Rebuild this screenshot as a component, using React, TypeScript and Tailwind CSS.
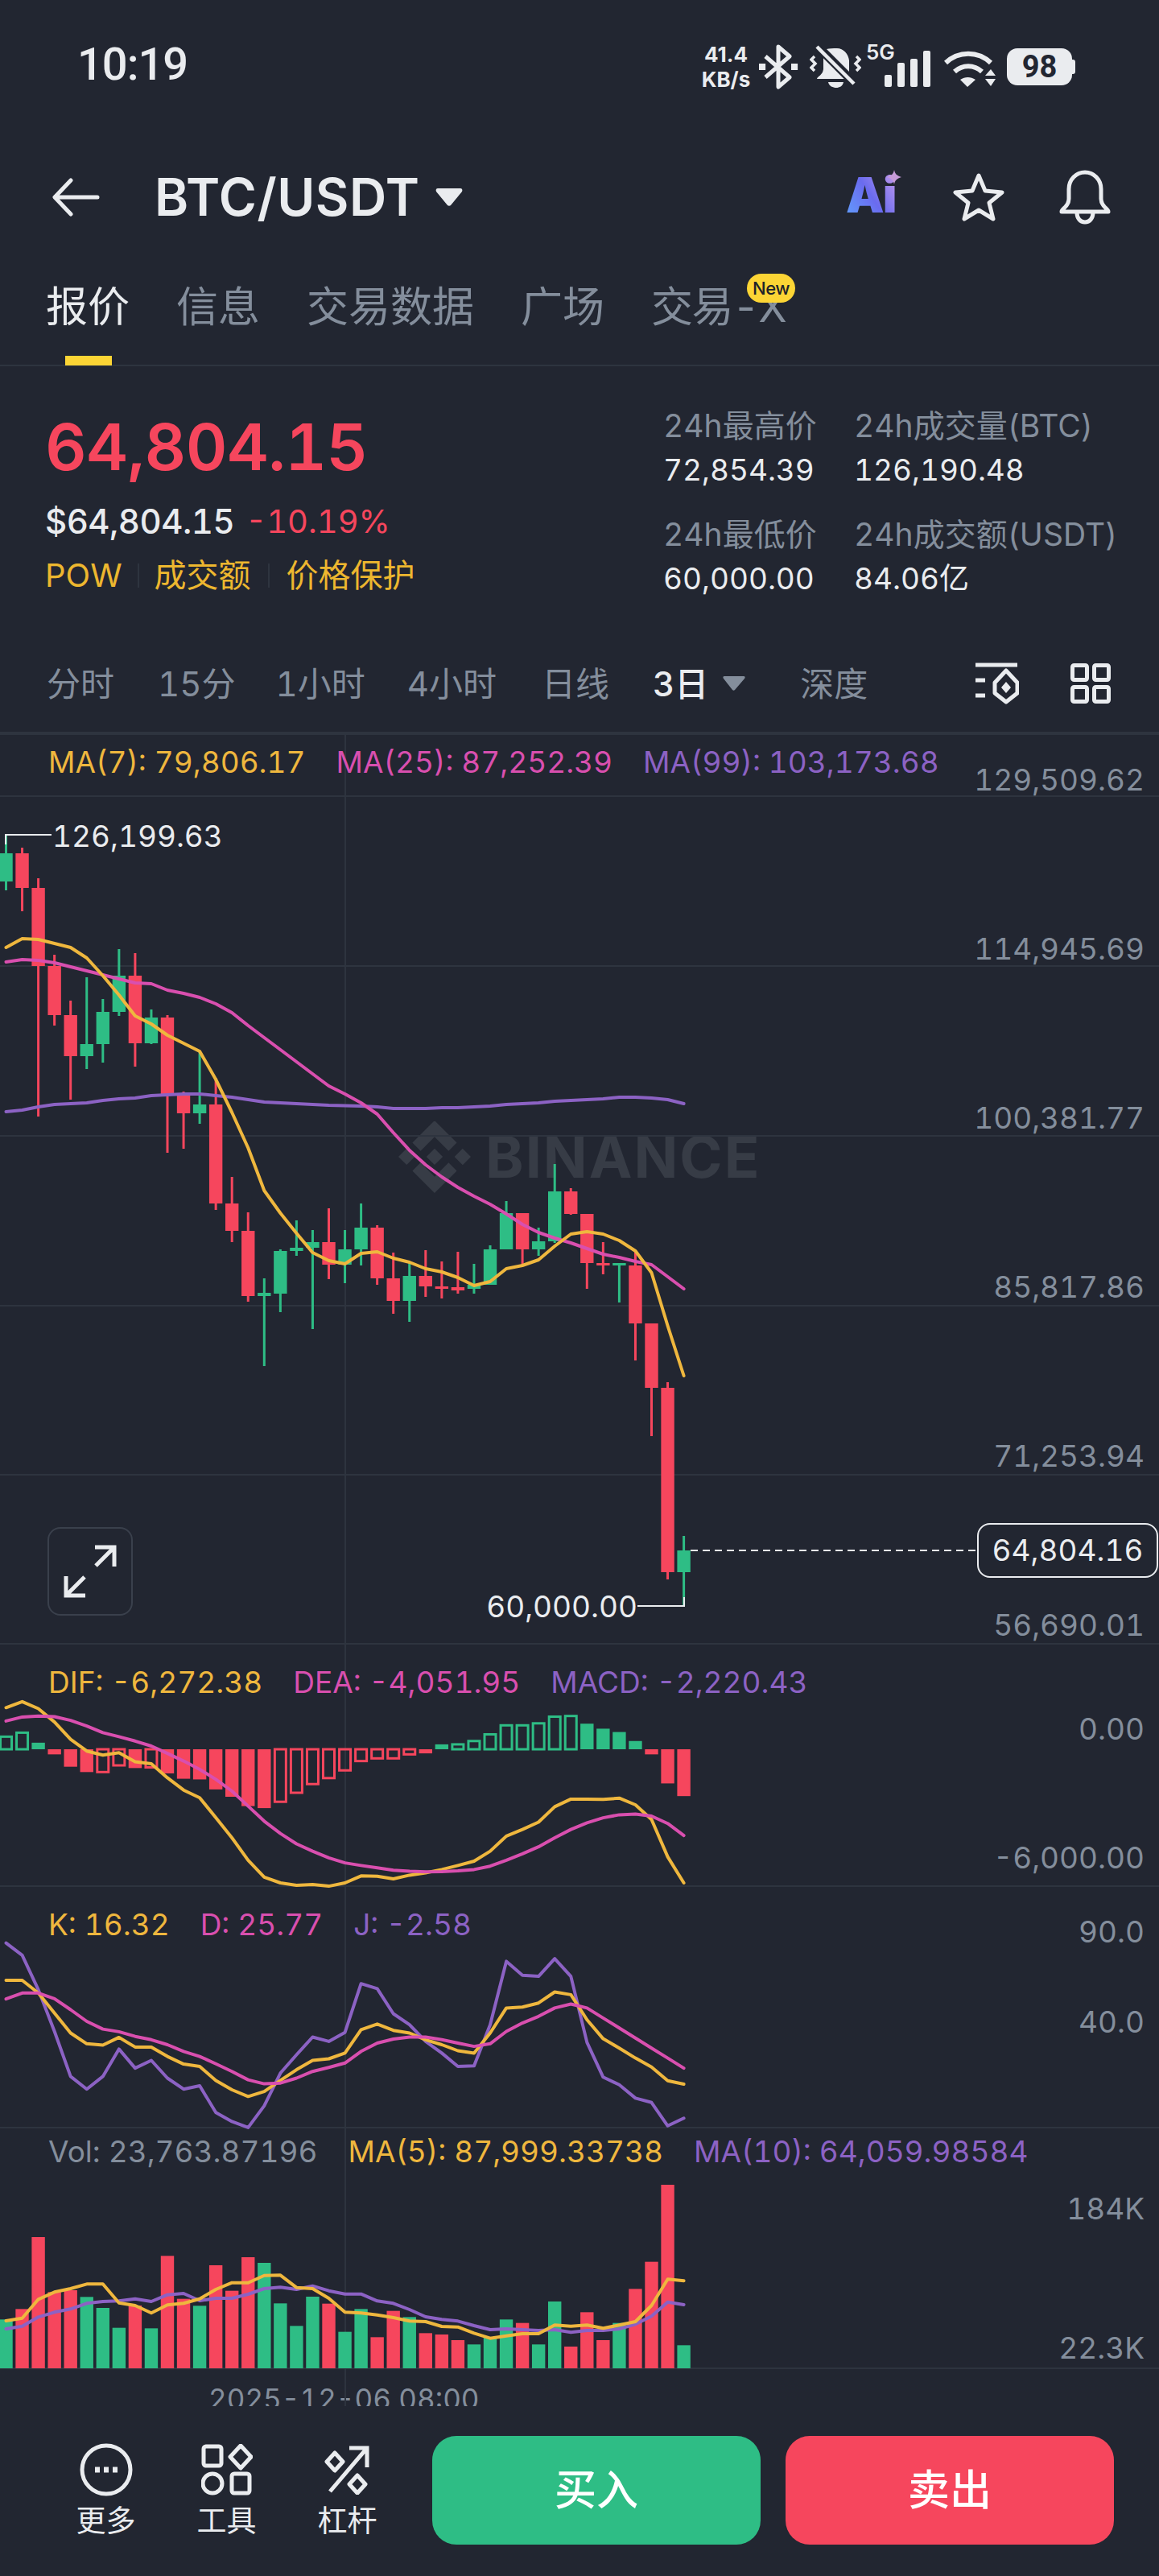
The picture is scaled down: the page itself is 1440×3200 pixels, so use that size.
const FONT = "font-['Inter','Noto_Sans_CJK_SC',sans-serif] tabular-nums";

const GREEN = '#2EBD85';
const RED = '#F6465D';
const YELLOW = '#EFB73E';
const PINK = '#D94FAF';
const PURPLE = '#8C62C4';
const GRID = '#2E343F';

const cx = (i: number) => 7.5 + 20.05 * i;

// [bodyTop, bodyBottom, wickTop, wickBottom, up]
const candles: [number, number, number, number, boolean][] = [
  [1061, 1096, 1038, 1107, true],
  [1061, 1104, 1054, 1133, false],
  [1104, 1201, 1092, 1388, false],
  [1201, 1262, 1187, 1275, false],
  [1262, 1313, 1244, 1367, false],
  [1298, 1313, 1215, 1329, true],
  [1258, 1298, 1242, 1321, true],
  [1213, 1258, 1180, 1263, true],
  [1213, 1297, 1185, 1326, false],
  [1265, 1297, 1255, 1298, true],
  [1265, 1360, 1262, 1433, false],
  [1362, 1384, 1357, 1428, false],
  [1373, 1384, 1308, 1397, true],
  [1373, 1496, 1340, 1504, false],
  [1496, 1530, 1463, 1544, false],
  [1530, 1611, 1507, 1618, false],
  [1607, 1611, 1589, 1698, true],
  [1555, 1608, 1553, 1631, true],
  [1551, 1555, 1517, 1561, true],
  [1544, 1551, 1529, 1652, true],
  [1544, 1572, 1502, 1590, false],
  [1553, 1572, 1529, 1595, true],
  [1526, 1553, 1496, 1573, true],
  [1526, 1589, 1523, 1597, false],
  [1589, 1617, 1557, 1633, false],
  [1586, 1617, 1570, 1643, true],
  [1586, 1599, 1554, 1612, false],
  [1599, 1602, 1568, 1614, false],
  [1600, 1604, 1556, 1608, false],
  [1597, 1602, 1571, 1608, true],
  [1553, 1597, 1548, 1597, true],
  [1508, 1553, 1493, 1553, true],
  [1508, 1553, 1508, 1572, false],
  [1543, 1553, 1526, 1561, true],
  [1481, 1543, 1447, 1545, true],
  [1481, 1509, 1477, 1510, false],
  [1509, 1570, 1509, 1602, false],
  [1570, 1573, 1544, 1584, false],
  [1570, 1573, 1570, 1619, true],
  [1573, 1645, 1555, 1691, false],
  [1645, 1725, 1645, 1785, false],
  [1725, 1954, 1718, 1963, false],
  [1927, 1954, 1909, 1996, true],
];

const ma7 = [1178, 1167, 1168, 1173, 1178, 1191, 1213, 1237, 1263, 1273, 1287, 1297, 1307, 1342, 1383, 1427, 1480, 1508, 1533, 1557, 1567, 1571, 1558, 1556, 1564, 1569, 1577, 1581, 1588, 1598, 1593, 1577, 1573, 1566, 1549, 1534, 1531, 1534, 1542, 1555, 1582, 1648, 1710];
const ma25 = [1196, 1193, 1194, 1197, 1202, 1207, 1212, 1217, 1222, 1223, 1231, 1235, 1240, 1248, 1259, 1275, 1290, 1305, 1320, 1335, 1350, 1360, 1371, 1385, 1408, 1430, 1448, 1463, 1476, 1487, 1497, 1509, 1522, 1532, 1539, 1545, 1552, 1559, 1563, 1568, 1572, 1587, 1602];
const ma99 = [1382, 1380, 1376, 1373, 1372, 1371, 1368, 1366, 1365, 1362, 1361, 1360, 1360, 1362, 1364, 1367, 1370, 1371, 1372, 1373, 1374, 1374.5, 1375, 1376, 1378, 1378, 1378, 1377, 1377, 1376, 1375, 1373, 1372, 1371, 1369, 1368, 1367, 1366, 1364, 1364, 1365, 1367, 1372];

// values read off the indicator panes, as offsets from y=2000
const macdBars: [number, boolean][] = [
  [382, true], [370, true], [400, false], [435, false], [472, false], [488, false], [488, true], [468, true], [476, false], [474, true],
  [492, false], [508, false], [510, false], [540, false], [562, false], [590, false], [596, false], [577, true], [550, true], [524, true],
  [506, true], [483, true], [455, true], [447, true], [447, true], [435, true], [432, false], [405, false], [405, true], [395, true],
  [375, true], [348, true], [348, true], [342, true], [322, true], [320, true], [343, false], [358, false], [368, false], [395, false],
  [435, false], [522, false], [560, false],
];
const dif = [295, 277, 298, 338, 390, 425, 437, 430, 457, 463, 505, 542, 565, 625, 685, 752, 803, 820, 827, 825, 830, 820, 799, 800, 808, 797, 790, 780, 768, 755, 725, 680, 660, 638, 592, 569, 569, 570, 566, 586, 630, 742, 820];
const dea = [335, 323, 320, 322, 333, 350, 370, 382, 395, 410, 432, 455, 480, 510, 545, 590, 635, 672, 703, 725, 745, 760, 768, 775, 782, 785, 787, 786, 784, 780, 770, 752, 733, 712, 685, 660, 640, 625, 616, 614, 620, 642, 678];
const kLine = [1112, 1112, 1150, 1210, 1270, 1302, 1306, 1283, 1312, 1312, 1340, 1363, 1370, 1412, 1440, 1460, 1445, 1412, 1380, 1352, 1347, 1330, 1260, 1243, 1262, 1270, 1290, 1305, 1323, 1330, 1270, 1195, 1192, 1180, 1147, 1155, 1230, 1287, 1315, 1345, 1372, 1413, 1423];
const dLine = [1168, 1150, 1150, 1167, 1200, 1235, 1258, 1266, 1280, 1290, 1305, 1325, 1340, 1362, 1385, 1410, 1422, 1420, 1405, 1385, 1373, 1360, 1325, 1300, 1288, 1282, 1282, 1290, 1300, 1310, 1302, 1265, 1240, 1220, 1195, 1183, 1195, 1225, 1255, 1285, 1315, 1345, 1375];
const jLine = [1000, 1037, 1140, 1265, 1400, 1438, 1400, 1318, 1375, 1352, 1405, 1438, 1428, 1508, 1535, 1553, 1488, 1390, 1335, 1282, 1295, 1268, 1122, 1137, 1212, 1245, 1295, 1330, 1370, 1368, 1245, 1055, 1097, 1100, 1047, 1100, 1298, 1402, 1425, 1465, 1478, 1548, 1525];

// volume, offsets from y=2620
const volBars: [number, boolean][] = [
  [787, true], [748, false], [480, false], [685, false], [678, false], [703, true], [744, true], [818, true], [735, false], [820, true],
  [550, false], [710, false], [736, true], [585, false], [680, false], [555, false], [576, true], [727, true], [811, true], [702, true],
  [728, false], [833, true], [748, true], [853, false], [755, false], [778, true], [838, false], [843, false], [864, false], [880, true],
  [855, true], [787, true], [800, false], [880, true], [720, true], [888, false], [760, false], [864, false], [800, true], [673, false],
  [572, false], [285, false], [883, true],
];
const volMa5 = [792, 782, 712, 685, 672, 655, 655, 725, 735, 763, 733, 727, 710, 675, 650, 650, 623, 622, 668, 672, 708, 760, 763, 770, 780, 793, 795, 813, 815, 838, 857, 848, 840, 840, 808, 812, 808, 820, 808, 795, 735, 637, 643];
const volMa10 = [822, 812, 778, 760, 748, 727, 720, 718, 710, 720, 695, 690, 717, 708, 708, 693, 672, 667, 675, 662, 680, 692, 692, 718, 727, 750, 777, 787, 793, 810, 825, 822, 825, 828, 825, 835, 828, 828, 822, 805, 775, 722, 732];

const macdY = (v: number) => 2000 + v / 2.412;
const volY = (v: number) => 2620 + v / 3;

function Line({ ys, color, width = 4, map }: { ys: number[]; color: string; width?: number; map?: (v: number) => number }) {
  const points = ys.map((y, i) => `${cx(i).toFixed(1)},${(map ? map(y) : y).toFixed(1)}`).join(' ');
  return <polyline points={points} fill="none" stroke={color} strokeWidth={width} strokeLinejoin="round" strokeLinecap="round" />;
}

function ChartDrawing() {
  const zeroY = 2174;
  return (
    <svg className="absolute left-0 top-0" width={1440} height={2078} viewBox="0 912 1440 2078">
      <g stroke={GRID} strokeWidth={2}>
        {[913, 990, 1201, 1412, 1623, 1833, 2043, 2344, 2644, 2943].map((y) => (
          <line key={y} x1={0} x2={1440} y1={y} y2={y} />
        ))}
        <line x1={429} x2={429} y1={912} y2={2990} />
      </g>

      {candles.map(([top, bottom, wickTop, wickBottom, up], i) => (
        <g key={i} fill={up ? GREEN : RED}>
          <rect x={cx(i) - 1.5} y={wickTop} width={3} height={wickBottom - wickTop} />
          <rect x={cx(i) - 8.2} y={top} width={16.4} height={bottom - top} />
        </g>
      ))}
      <Line ys={ma99} color={PURPLE} />
      <Line ys={ma25} color={PINK} />
      <Line ys={ma7} color={YELLOW} />

      <polyline points="7,1050 7,1038 64,1038" fill="none" stroke="#EAECEF" strokeWidth={2} />
      <polyline points="792,1996 850,1996 850,1985" fill="none" stroke="#EAECEF" strokeWidth={2} />
      <line x1={858} x2={1213} y1={1927} y2={1927} stroke="#EAECEF" strokeWidth={2} strokeDasharray="9 6" />

      {macdBars.map(([v, hollow], i) => {
        const y = macdY(v);
        const isUp = y < zeroY;
        const top = isUp ? y : zeroY;
        const h = Math.abs(y - zeroY);
        const color = isUp ? GREEN : RED;
        return hollow ? (
          <rect key={i} x={cx(i) - 7} y={top} width={14} height={h} fill="none" stroke={color} strokeWidth={3} />
        ) : (
          <rect key={i} x={cx(i) - 8.2} y={top} width={16.4} height={h} fill={color} />
        );
      })}
      <Line ys={dif} color={YELLOW} map={macdY} />
      <Line ys={dea} color={PINK} map={macdY} />

      <Line ys={jLine} color={PURPLE} map={macdY} />
      <Line ys={kLine} color={YELLOW} map={macdY} />
      <Line ys={dLine} color={PINK} map={macdY} />

      {volBars.map(([v, up], i) => (
        <rect key={i} x={cx(i) - 8.2} y={volY(v)} width={16.4} height={2943 - volY(v)} fill={up ? GREEN : RED} />
      ))}
      <Line ys={volMa10} color={PURPLE} map={volY} />
      <Line ys={volMa5} color={YELLOW} map={volY} />
    </svg>
  );
}

function Bluetooth() {
  return (
    <svg width="50" height="56" viewBox="0 0 50 56" fill="none" stroke="#EAECEF" strokeWidth="5">
      <path d="M9 15l30 26-14 12V3l14 12L9 41" strokeLinejoin="round" />
      <path d="M5 28h.1M45 28h.1" strokeWidth="8" strokeLinecap="square" />
    </svg>
  );
}

function MutedBell() {
  return (
    <svg width="64" height="54" viewBox="0 0 64 54" fill="#EAECEF">
      <path d="M34 4c8 0 14 7 15 15v14l-28-28c3-1 8-1 13-1zM17 13l29 29H9c0-3 7-4 8-12z" />
      <path d="M23 46h19c-1 5-5 7-9 7s-9-2-10-7z" />
      <path d="M9 2l46 46" stroke="#222631" strokeWidth="9" />
      <path d="M9 2l46 46" stroke="#EAECEF" strokeWidth="4.5" />
      <path d="M6 14l-4 4 5 5-5 5 4 4M58 14l4 4-5 5 5 5-4 4" fill="none" stroke="#EAECEF" strokeWidth="3.5" />
    </svg>
  );
}

function Signal() {
  return (
    <div className="flex h-[46px] items-end gap-[7px]">
      <div className="h-[15px] w-[9px] rounded-[2px] bg-[#EAECEF]" />
      <div className="h-[30px] w-[9px] rounded-[2px] bg-[#EAECEF]" />
      <div className="h-[35px] w-[9px] rounded-[2px] bg-[#EAECEF]" />
      <div className="h-[45px] w-[9px] rounded-[2px] bg-[#EAECEF]" />
    </div>
  );
}

function Wifi() {
  return (
    <svg width="64" height="46" viewBox="0 0 64 46" fill="none" stroke="#EAECEF" strokeWidth="6">
      <path d="M2 15c16-15 40-15 56 0" />
      <path d="M13 26c10-9 24-9 34 0" />
      <path d="M20 36l9 9 10-9c-6-4-13-4-19 0z" fill="#EAECEF" stroke="none" />
      <path d="M51 31l7-8 6 8zM51 35h13l-6 9z" fill="#EAECEF" stroke="none" />
    </svg>
  );
}

function StatusBar() {
  return (
    <div className="flex h-[190px] items-start justify-between pl-[96px] pr-[104px] pt-[52px]">
      <div className="mt-[8px] font-['Roboto',sans-serif] text-[56px] leading-[40px] font-medium tracking-[-1px] text-[#EAECEF]">10:19</div>
      <div className="flex items-center">
        <div className="flex w-[64px] flex-col items-center font-['Inter',sans-serif] text-[26px] leading-[31px] font-bold text-[#EAECEF]">
          <span>41.4</span>
          <span>KB/s</span>
        </div>
        <div className="ml-[8px]"><Bluetooth /></div>
        <div className="ml-[14px]"><MutedBell /></div>
        <div className="relative ml-[29px] w-[57px]">
          <span className="absolute left-[-23px] top-[-6px] font-['Inter',sans-serif] text-[26px] leading-[26px] font-semibold text-[#EAECEF]">5G</span>
          <div className="pt-[4px]"><Signal /></div>
        </div>
        <div className="ml-[17px] mt-[6px]"><Wifi /></div>
        <div className="ml-[14px] flex items-center">
          <div className="flex h-[46px] w-[81px] items-center justify-center rounded-[13px] bg-[#EAECEF] font-['Roboto',sans-serif] text-[38px] font-bold text-[#222631]">98</div>
          <div className="h-[18px] w-[4px] rounded-r-[3px] bg-[#EAECEF]" />
        </div>
      </div>
    </div>
  );
}

function AiLogo() {
  return (
    <div className="relative h-[60px] w-[66px]">
      <span className="absolute bottom-[-12px] left-0 bg-gradient-to-tr from-[#5AA8FF] via-[#6A6BEF] to-[#D8A0E8] bg-clip-text font-['Inter',sans-serif] text-[60px] font-black tracking-[-2px] text-transparent">Ai</span>
      <svg className="absolute right-[-3px] top-[-4px]" width="18" height="18" viewBox="0 0 18 18">
        <path d="M9 0c1 5 3 7 9 9-6 2-8 4-9 9-1-5-3-7-9-9 6-2 8-4 9-9z" fill="#C79BD8" />
      </svg>
    </div>
  );
}

function NavBar() {
  return (
    <div className="flex h-[100px] items-center pl-[64px] pr-[60px] pt-[10px]">
      <svg width="60" height="48" viewBox="0 0 60 48" fill="none" stroke="#EAECEF" strokeWidth="5" strokeLinecap="round" strokeLinejoin="round">
        <path d="M57 24H5M24 3L4 24l20 21" />
      </svg>
      <div className="ml-[68px] font-['Inter',sans-serif] text-[64px] leading-none font-semibold tracking-[0.5px] text-[#EAECEF]">BTC/USDT</div>
      <svg className="ml-[20px]" width="34" height="22" viewBox="0 0 34 22"><path d="M3 0h28c2 0 3 2 2 4L19 21c-1 1-3 1-4 0L1 4C0 2 1 0 3 0z" fill="#EAECEF" /></svg>
      <div className="ml-auto flex items-center">
        <AiLogo />
        <svg className="ml-[67px]" width="64" height="62" viewBox="0 0 64 62" fill="none" stroke="#EAECEF" strokeWidth="5" strokeLinejoin="round">
          <path d="M32 4l8 19 21 2-16 13 5 20-18-11-18 11 5-20L3 25l21-2z" />
        </svg>
        <svg className="ml-[68px]" width="64" height="68" viewBox="0 0 64 68" fill="none" stroke="#EAECEF" strokeWidth="5" strokeLinejoin="round">
          <path d="M3 52c0-4 9-6 9-16V24C12 12 21 3 32 3s20 9 20 21v12c0 10 9 12 9 16z" />
          <path d="M22 53c0 7 4 12 10 12s10-5 10-12" />
        </svg>
      </div>
    </div>
  );
}

function Tabs() {
  const tabs = ['信息', '交易数据', '广场'];
  return (
    <div className={`flex items-start gap-[58px] border-b-2 border-[#2E343F] pb-[41px] pl-[57px] pt-[62px] text-[52px] leading-[60px] text-[#848E9C] ${FONT}`}>
      <span className="relative text-[#EAECEF]">
        报价
        <span className="absolute left-[24px] top-[90px] h-[12px] w-[58px] bg-[#FCD535]" />
      </span>
      {tabs.map((t) => (
        <span key={t}>{t}</span>
      ))}
      <span className="relative tracking-[-1.5px]">
        交易-X
        <span className="absolute left-[119px] top-[-12px] flex h-[36px] w-[60px] items-center justify-center rounded-full bg-[#FCD535] text-[22px] font-medium tracking-[-0.5px] text-[#1E2329]">New</span>
      </span>
    </div>
  );
}

function Stat({ label, value }: { label: string; value: string }) {
  return (
    <div className="flex flex-col">
      <span className="text-[39px] leading-[50px] whitespace-nowrap text-[#848E9C]">{label}</span>
      <span className="mt-[7px] text-[37px] leading-[46px] text-[#EAECEF]">{value}</span>
    </div>
  );
}

function PriceBlock() {
  return (
    <div className={`flex h-[328px] pl-[56px] pt-[50px] ${FONT}`}>
      <div className="flex w-[768px] flex-col">
        <div className="text-[80px] leading-[100px] font-semibold tracking-[-0.5px] text-[#F6465D]">64,804.15</div>
        <div className="mt-[18px] flex items-center text-[42px] leading-[50px]">
          <span className="font-medium tracking-[-0.5px] text-[#EAECEF]">$64,804.15</span>
          <span className="ml-[14px] text-[40px] text-[#F6465D]">-10.19%</span>
        </div>
        <div className="mt-[17px] flex items-center text-[40px] leading-[50px] text-[#EDB72F]">
          <span>POW</span>
          <span className="mx-[19px] h-[30px] w-[2px] bg-[#2E343F]" />
          <span>成交额</span>
          <span className="mx-[21px] h-[30px] w-[2px] bg-[#2E343F]" />
          <span>价格保护</span>
        </div>
      </div>
      <div className="-mt-[1px] grid h-[250px] grid-cols-[237px_auto] content-start gap-y-[32px]">
        <Stat label="24h最高价" value="72,854.39" />
        <Stat label="24h成交量(BTC)" value="126,190.48" />
        <Stat label="24h最低价" value="60,000.00" />
        <Stat label="24h成交额(USDT)" value="84.06亿" />
      </div>
    </div>
  );
}

function Intervals() {
  return (
    <div className={`flex h-[128px] items-center border-b-2 border-[#2E343F] pl-[58px] pr-[60px] pt-[6px] text-[42px] text-[#848E9C] ${FONT}`}>
      <span>分时</span>
      <span className="ml-[54px]">15分</span>
      <span className="ml-[50px]">1小时</span>
      <span className="ml-[52px]">4小时</span>
      <span className="ml-[56px]">日线</span>
      <span className="ml-[54px] font-medium text-[#EAECEF]">3日</span>
      <svg className="ml-[18px]" width="28" height="18" viewBox="0 0 28 18"><path d="M2 0h24c2 0 2 2 1 3L15 17c-1 1-2 1-3 0L1 3C0 2 0 0 2 0z" fill="#848E9C" /></svg>
      <span className="ml-[68px]">深度</span>
      <div className="ml-auto flex items-center gap-[64px]">
        <svg width="54" height="52" viewBox="0 0 54 52" fill="none" stroke="#EAECEF" strokeWidth="5">
          <path d="M0 3h52M0 22h12M0 41h12" />
          <path d="M38 10l14 15v13L38 49 24 38V25z" strokeLinejoin="round" />
          <path d="M38 24l6 7-6 7-6-7z" fill="#EAECEF" stroke="none" />
        </svg>
        <svg width="50" height="50" viewBox="0 0 50 50" fill="none" stroke="#EAECEF" strokeWidth="5">
          <rect x="2.5" y="2.5" width="18" height="18" rx="2" />
          <rect x="29.5" y="2.5" width="18" height="18" rx="2" />
          <rect x="2.5" y="29.5" width="18" height="18" rx="2" />
          <rect x="29.5" y="29.5" width="18" height="18" rx="2" />
        </svg>
      </div>
    </div>
  );
}

function Legend({ items, className }: { items: { text: string; color: string }[]; className: string }) {
  return (
    <div className={`relative flex gap-[38px] pl-[60px] text-[37px] leading-[46px] ${className}`}>
      {items.map((item) => (
        <span key={item.text} className={item.color}>{item.text}</span>
      ))}
    </div>
  );
}

const axis = 'text-right text-[37px] leading-[52px] text-[#848E9C]';

function Chart() {
  return (
    <div className={`relative h-[2078px] overflow-hidden ${FONT}`}>
      {/* watermark sits under the drawing */}
      <div className="absolute left-[495px] top-[481px] flex items-center gap-[18px] text-[#373C46]">
        <svg width="90" height="90" viewBox="0 0 24 24" fill="currentColor">
          <path d="M16.624 13.9202l2.7175 2.7154-7.353 7.353-7.353-7.352 2.7175-2.7164 4.6355 4.6595 4.6356-4.6595zm4.6366-4.6366L24 12l-2.7154 2.7164L18.5682 12l2.6924-2.7164zm-9.272.001l2.7163 2.6914-2.7164 2.7174v-.001L9.2721 12l2.7164-2.7154zm-9.2722-.001L5.4088 12l-2.6914 2.6924L0 12l2.7164-2.7164zM11.9885.0115l7.353 7.329-2.7174 2.7154-4.6356-4.6356-4.6355 4.6595-2.7174-2.7154 7.353-7.353z" />
        </svg>
        <span className="text-[72px] leading-none font-bold tracking-[2px]">BINANCE</span>
      </div>
      <ChartDrawing />

      <div className="relative h-[1132px]">
        <Legend
          className="pt-[13px]"
          items={[
            { text: 'MA(7): 79,806.17', color: 'text-[#EFB73E]' },
            { text: 'MA(25): 87,252.39', color: 'text-[#D94FAF]' },
            { text: 'MA(99): 103,173.68', color: 'text-[#8C62C4]' },
          ]}
        />
        <div className={`absolute right-[18px] top-[32px] flex flex-col gap-[158px] ${axis}`}>
          <span>129,509.62</span>
          <span>114,945.69</span>
          <span>100,381.77</span>
          <span>85,817.86</span>
          <span>71,253.94</span>
          <span>56,690.01</span>
        </div>
        <span className="absolute left-[65px] top-[102px] text-[37px] leading-[52px] text-[#EAECEF]">126,199.63</span>
        <span className="absolute right-[648px] top-[1059px] text-[37px] leading-[52px] text-[#EAECEF]">60,000.00</span>
        <div className="absolute left-[1214px] top-[981px] flex h-[68px] w-[225px] items-center justify-center rounded-[16px] border-2 border-[#EAECEF] bg-[#222631] text-[37px] text-[#EAECEF]">64,804.16</div>
        <div className="absolute left-[59px] top-[986px] flex h-[110px] w-[106px] items-center justify-center rounded-[16px] border-2 border-[#3A404C]">
          <svg width="68" height="68" viewBox="0 0 68 68" fill="none" stroke="#EAECEF" strokeWidth="5">
            <path d="M40 4h24v24M64 4L41 27M28 64H4V40M4 64l23-23" />
          </svg>
        </div>
      </div>

      <div className="relative h-[300px]">
        <Legend
          className="pt-[24px]"
          items={[
            { text: 'DIF: -6,272.38', color: 'text-[#EFB73E]' },
            { text: 'DEA: -4,051.95', color: 'text-[#D94FAF]' },
            { text: 'MACD: -2,220.43', color: 'text-[#8C62C4]' },
          ]}
        />
        <div className={`absolute right-[18px] top-[79px] flex flex-col gap-[108px] ${axis}`}>
          <span>0.00</span>
          <span>-6,000.00</span>
        </div>
      </div>

      <div className="relative h-[300px]">
        <Legend
          className="pt-[25px]"
          items={[
            { text: 'K: 16.32', color: 'text-[#EFB73E]' },
            { text: 'D: 25.77', color: 'text-[#D94FAF]' },
            { text: 'J: -2.58', color: 'text-[#8C62C4]' },
          ]}
        />
        <div className={`absolute right-[18px] top-[31px] flex flex-col gap-[60px] ${axis}`}>
          <span>90.0</span>
          <span>40.0</span>
        </div>
      </div>

      <div className="relative h-[299px]">
        <Legend
          className="pt-[7px]"
          items={[
            { text: 'Vol: 23,763.87196', color: 'text-[#848E9C]' },
            { text: 'MA(5): 87,999.33738', color: 'text-[#EFB73E]' },
            { text: 'MA(10): 64,059.98584', color: 'text-[#8C62C4]' },
          ]}
        />
        <div className={`absolute right-[18px] top-[75px] flex flex-col gap-[121px] ${axis}`}>
          <span>184K</span>
          <span>22.3K</span>
        </div>
      </div>

      <div className="pl-[259px] pt-[15px] text-[35px] leading-[46px] text-[#848E9C]">2025-12-06 08:00</div>
    </div>
  );
}

function FooterIcon({ label, children }: { label: string; children: React.ReactNode }) {
  return (
    <div className="flex w-[73px] flex-col items-center">
      <div className="flex h-[72px] items-center justify-center">{children}</div>
      <span className="mt-[6px] text-[37px] leading-[44px] whitespace-nowrap text-[#EAECEF]">{label}</span>
    </div>
  );
}

function Footer() {
  return (
    <div className={`flex h-[210px] items-start bg-[#222631] pl-[95px] pr-[56px] pt-[37px] ${FONT}`}>
      <div className="flex gap-[77px] pt-[6px]">
        <FooterIcon label="更多">
          <svg width="66" height="66" viewBox="0 0 66 66" fill="none" stroke="#EAECEF" strokeWidth="5">
            <circle cx="33" cy="33" r="30" />
            <path d="M19 33h6M30 33h6M41 33h6" strokeWidth="7" />
          </svg>
        </FooterIcon>
        <FooterIcon label="工具">
          <svg width="64" height="64" viewBox="0 0 64 64" fill="none" stroke="#EAECEF" strokeWidth="5">
            <rect x="3" y="3" width="22" height="24" rx="3" />
            <path d="M49 2l13 14-13 14-13-14z" strokeLinejoin="round" />
            <circle cx="14" cy="49" r="12" />
            <rect x="38" y="37" width="22" height="24" rx="3" />
          </svg>
        </FooterIcon>
        <FooterIcon label="杠杆">
          <svg width="60" height="62" viewBox="0 0 60 62" fill="none" stroke="#EAECEF" strokeWidth="5">
            <path d="M14 10l10 11-10 11L4 21z" strokeLinejoin="round" />
            <path d="M42 38l10 11-10 11-10-11z" strokeLinejoin="round" />
            <path d="M8 58L54 4M32 4h22v24" />
          </svg>
        </FooterIcon>
      </div>
      <div className="ml-auto flex gap-[31px]">
        <div className="flex h-[135px] w-[408px] items-center justify-center rounded-[30px] bg-[#2EBD85] text-[52px] font-medium text-white">买入</div>
        <div className="flex h-[135px] w-[408px] items-center justify-center rounded-[30px] bg-[#F6465D] text-[52px] font-medium text-white">卖出</div>
      </div>
    </div>
  );
}

export default function App() {
  return (
    <div className="flex h-[3200px] w-[1440px] flex-col overflow-hidden bg-[#222631]">
      <StatusBar />
      <NavBar />
      <Tabs />
      <PriceBlock />
      <Intervals />
      <Chart />
      <Footer />
    </div>
  );
}
